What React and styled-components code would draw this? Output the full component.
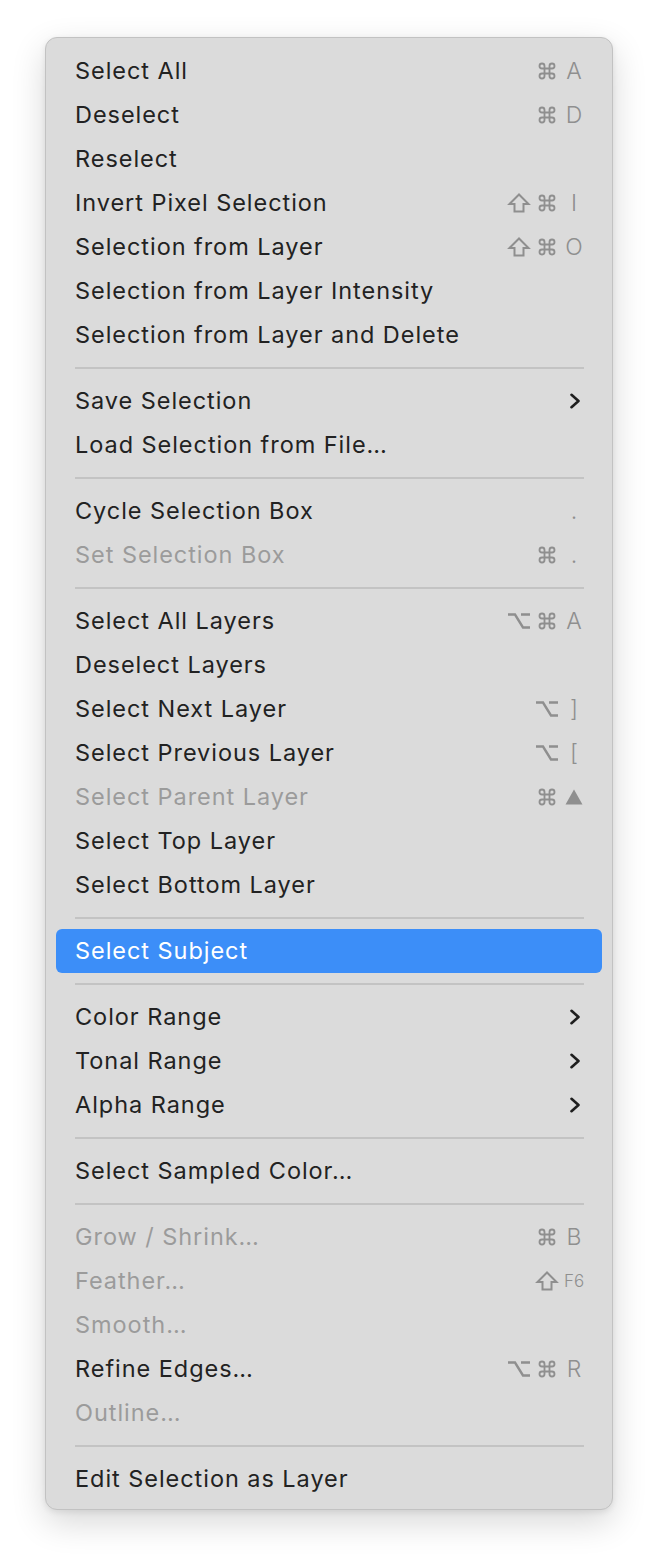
import React from "react";
import styled, { createGlobalStyle } from "styled-components";

const Global = createGlobalStyle`
  html, body { margin: 0; padding: 0; background: #ffffff; }
  body { font-family: Inter, "Noto Sans", "Liberation Sans", sans-serif; -webkit-font-smoothing: antialiased; }
`;

const Page = styled.div`
  padding: 37px 0 0 45px;
  height: 1564px;
  box-sizing: border-box;
`;

const Menu = styled.div`
  width: 568px;
  box-sizing: border-box;
  background: #dbdbdb;
  border: 1px solid #c2c2c2;
  border-radius: 12px;
  padding: 11px 10px 8px;
  box-shadow: 0 12px 34px rgba(0, 0, 0, 0.16), 0 2px 6px rgba(0, 0, 0, 0.08);
  display: flex;
  flex-direction: column;
`;

const Row = styled.div`
  height: 44px;
  display: flex;
  align-items: center;
  justify-content: space-between;
  padding: 0 18px 0 19px;
  border-radius: 6px;
  background: ${(p) => (p.$active ? "#3c8ef8" : "transparent")};
  color: ${(p) => (p.$active ? "#ffffff" : p.$disabled ? "#9b9b9b" : "#222222")};
`;

const Label = styled.span`
  font-size: 23.5px;
  letter-spacing: 0.95px;
  line-height: 1;
`;

const Separator = styled.div`
  height: 22px;
  display: flex;
  align-items: center;
  padding: 0 18px 0 19px;
  &::after {
    content: "";
    flex: 1;
    height: 2px;
    background: #c3c3c3;
  }
`;

const Shortcut = styled.div`
  display: grid;
  grid-template-columns: 26px 22px 24px;
  column-gap: 4px;
  align-items: center;
  justify-items: center;
  color: #8f8f8f;
  margin-right: -2px;
`;

const Key = styled.span`
  font-size: ${(p) => (p.$small ? "17px" : "23px")};
  font-weight: 300;
  line-height: 1;
  grid-column: 3;
  color: inherit;
`;

const Mod = styled.span`
  display: flex;
  align-items: center;
  justify-content: center;
  grid-column: ${(p) => p.$col};
`;

const Chevron = styled.span`
  display: flex;
  align-items: center;
  color: #1e1e1e;
  margin-right: 3px;
`;

const Cmd = () => (
  <svg width="20" height="20" viewBox="0 0 24 24" fill="none" stroke="currentColor" strokeWidth="2.2" strokeLinecap="round" strokeLinejoin="round">
    <path d="M15 6v12a3 3 0 1 0 3-3H6a3 3 0 1 0 3 3V6a3 3 0 1 0-3 3h12a3 3 0 1 0-3-3" />
  </svg>
);

const Shift = () => (
  <svg width="24" height="22" viewBox="0 0 24 22" fill="none" stroke="currentColor" strokeWidth="2" strokeLinejoin="miter">
    <path d="M12 2.5 L2.5 12 H7.5 V19.5 H16.5 V12 H21.5 Z" />
  </svg>
);

const Opt = () => (
  <svg width="24" height="20" viewBox="0 0 24 20" fill="none" stroke="currentColor" strokeWidth="2.4">
    <path d="M1 3.5 H8 L16 16.5 H23 M14 3.5 H23" />
  </svg>
);

const Tri = () => (
  <svg width="18" height="16" viewBox="0 0 18 16" fill="currentColor">
    <path d="M9 0.5 L17.5 15.5 H0.5 Z" />
  </svg>
);

const Arrow = () => (
  <svg width="12" height="16" viewBox="0 0 12 16" fill="none" stroke="currentColor" strokeWidth="2.6" strokeLinecap="round" strokeLinejoin="round">
    <path d="M2.5 1.8 L9.5 8 L2.5 14.2" />
  </svg>
);

const SC = ({ mods = [], k, small, tri }) => {
  const hasCmd = mods.includes("cmd");
  return (
    <Shortcut>
      {mods.includes("shift") && (
        <Mod $col={hasCmd ? 1 : 2}>
          <Shift />
        </Mod>
      )}
      {mods.includes("opt") && (
        <Mod $col={hasCmd ? 1 : 2}>
          <Opt />
        </Mod>
      )}
      {hasCmd && (
        <Mod $col={2}>
          <Cmd />
        </Mod>
      )}
      {tri ? (
        <Mod $col={3}>
          <Tri />
        </Mod>
      ) : (
        k && <Key $small={small}>{k}</Key>
      )}
    </Shortcut>
  );
};

const sections = [
  [
    { t: "Select All", s: { mods: ["cmd"], k: "A" } },
    { t: "Deselect", s: { mods: ["cmd"], k: "D" } },
    { t: "Reselect" },
    { t: "Invert Pixel Selection", s: { mods: ["shift", "cmd"], k: "I" } },
    { t: "Selection from Layer", s: { mods: ["shift", "cmd"], k: "O" } },
    { t: "Selection from Layer Intensity" },
    { t: "Selection from Layer and Delete" },
  ],
  [
    { t: "Save Selection", sub: true },
    { t: "Load Selection from File…" },
  ],
  [
    { t: "Cycle Selection Box", s: { mods: [], k: "." } },
    { t: "Set Selection Box", d: true, s: { mods: ["cmd"], k: "." } },
  ],
  [
    { t: "Select All Layers", s: { mods: ["opt", "cmd"], k: "A" } },
    { t: "Deselect Layers" },
    { t: "Select Next Layer", s: { mods: ["opt"], k: "]" } },
    { t: "Select Previous Layer", s: { mods: ["opt"], k: "[" } },
    { t: "Select Parent Layer", d: true, s: { mods: ["cmd"], tri: true } },
    { t: "Select Top Layer" },
    { t: "Select Bottom Layer" },
  ],
  [{ t: "Select Subject", active: true }],
  [
    { t: "Color Range", sub: true },
    { t: "Tonal Range", sub: true },
    { t: "Alpha Range", sub: true },
  ],
  [{ t: "Select Sampled Color…" }],
  [
    { t: "Grow / Shrink…", d: true, s: { mods: ["cmd"], k: "B" } },
    { t: "Feather…", d: true, s: { mods: ["shift"], k: "F6", small: true } },
    { t: "Smooth…", d: true },
    { t: "Refine Edges…", s: { mods: ["opt", "cmd"], k: "R" } },
    { t: "Outline…", d: true },
  ],
  [{ t: "Edit Selection as Layer" }],
];

export default function App() {
  return (
    <Page>
      <Global />
      <Menu>
        {sections.map((sec, i) => (
          <React.Fragment key={i}>
            {i > 0 && <Separator />}
            {sec.map((it) => (
              <Row key={it.t} $active={it.active} $disabled={it.d}>
                <Label>{it.t}</Label>
                {it.s && <SC {...it.s} />}
                {it.sub && (
                  <Chevron>
                    <Arrow />
                  </Chevron>
                )}
              </Row>
            ))}
          </React.Fragment>
        ))}
      </Menu>
    </Page>
  );
}
